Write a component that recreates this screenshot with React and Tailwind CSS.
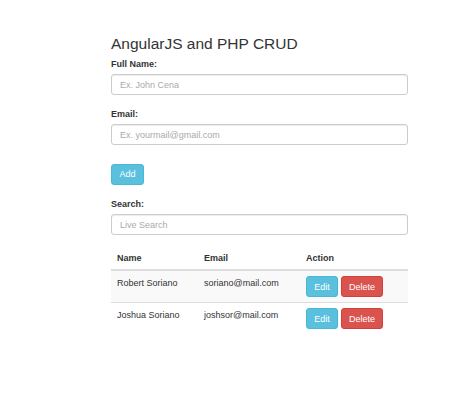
const rows = [
  { id: 1, name: "Robert Soriano", email: "soriano@mail.com" },
  { id: 2, name: "Joshua Soriano", email: "joshsor@mail.com" },
];

function Field({ label, placeholder, className = "" }) {
  return (
    <div className={className}>
      <div className="text-[9px] leading-[12px] font-bold text-[#333]">{label}</div>
      <input
        placeholder={placeholder}
        className="mt-[4px] block h-[21px] w-full rounded-[3px] border border-[#ccc] bg-white px-[8px] text-[9px] text-[#555] shadow-[inset_0_1px_1px_rgba(0,0,0,0.075)] outline-none placeholder:text-[#aaa]"
      />
    </div>
  );
}

export default function App() {
  return (
    <div className="min-h-[405px] bg-white font-['Liberation_Sans',Arial,sans-serif] text-[#333]">
      <div className="ml-[111px] w-[297px] pt-[34px]">
        <h1 className="text-[15.5px] leading-[20px] font-normal">AngularJS and PHP CRUD</h1>

        <Field className="mt-[4px]" label="Full Name:" placeholder="Ex. John Cena" />
        <Field className="mt-[13px]" label="Email:" placeholder="Ex. yourmail@gmail.com" />

        <button className="mt-[19px] block h-[21px] w-[33px] rounded-[3px] border border-[#46b8da] bg-[#5bc0de] text-[9px] text-white">
          Add
        </button>

        <Field className="mt-[13px]" label="Search:" placeholder="Live Search" />

        <div className="mt-[12px] text-[9px] leading-[12px]">
          <div className="grid h-[24px] grid-cols-[87px_102px_1fr] items-center border-b-2 border-[#ddd] px-[6px] font-bold">
            <div>Name</div>
            <div>Email</div>
            <div>Action</div>
          </div>
          {rows.map((r, i) => (
            <div
              key={r.id}
              className={`grid h-[32px] grid-cols-[87px_102px_1fr] border-b border-[#ddd] px-[6px] ${
                i % 2 === 0 ? "bg-[#f9f9f9]" : ""
              } ${i === rows.length - 1 ? "border-b-0" : ""}`}
            >
              <div className="pt-[6px]">{r.name}</div>
              <div className="pt-[6px]">{r.email}</div>
              <div className="flex gap-[3px] pt-[5px]">
                <button className="h-[21px] w-[32px] rounded-[3px] border border-[#46b8da] bg-[#5bc0de] text-[9px] text-white">
                  Edit
                </button>
                <button className="h-[21px] w-[42px] rounded-[3px] border border-[#d43f3a] bg-[#d9534f] text-[9px] text-white">
                  Delete
                </button>
              </div>
            </div>
          ))}
        </div>
      </div>
    </div>
  );
}
